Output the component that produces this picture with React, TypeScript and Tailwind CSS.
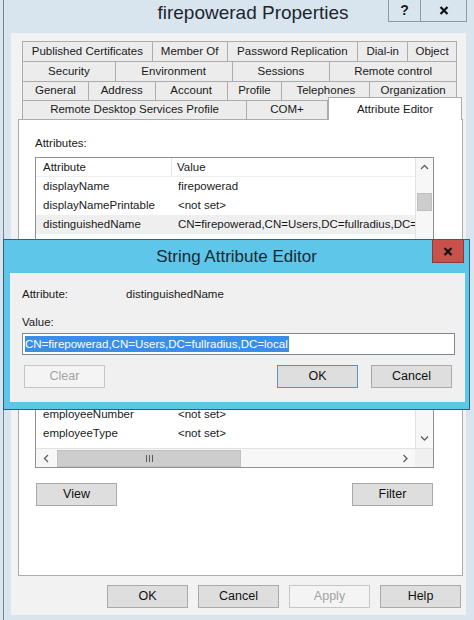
const tabRows = [
  {
    h: "h-[20px]",
    tabs: [
      { label: "Published Certificates", w: "w-[130px]" },
      { label: "Member Of", w: "w-[75px]" },
      { label: "Password Replication", w: "w-[131px]" },
      { label: "Dial-in", w: "w-[50px]" },
      { label: "Object", w: "w-[49px]" },
    ],
  },
  {
    h: "h-[20px]",
    tabs: [
      { label: "Security", w: "w-[93px]" },
      { label: "Environment", w: "w-[117px]" },
      { label: "Sessions", w: "w-[98px]" },
      { label: "Remote control", w: "w-[127px]" },
    ],
  },
  {
    h: "h-[19px]",
    tabs: [
      { label: "General", w: "w-[66px]" },
      { label: "Address", w: "w-[67px]" },
      { label: "Account", w: "w-[72px]" },
      { label: "Profile", w: "w-[55px]" },
      { label: "Telephones", w: "w-[88px]" },
      { label: "Organization", w: "w-[87px]" },
    ],
  },
];

// rows behind the editor dialog are left blank
const attributes = [
  { name: "displayName", value: "firepowerad" },
  { name: "displayNamePrintable", value: "<not set>" },
  { name: "distinguishedName", value: "CN=firepowerad,CN=Users,DC=fullradius,DC=local", active: true },
  { name: "", value: "" },
  { name: "", value: "" },
  { name: "", value: "" },
  { name: "", value: "" },
  { name: "", value: "" },
  { name: "", value: "" },
  { name: "", value: "" },
  { name: "", value: "" },
  { name: "", value: "" },
  { name: "employeeNumber", value: "<not set>" },
  { name: "employeeType", value: "<not set>" },
];

function Chevron({ dir }: { dir: "up" | "down" | "left" | "right" }) {
  const d = {
    up: "M1 5 L4.5 1.5 L8 5",
    down: "M1 1.5 L4.5 5 L8 1.5",
    left: "M5 1 L1.5 4.5 L5 8",
    right: "M1.5 1 L5 4.5 L1.5 8",
  }[dir];
  const horiz = dir === "left" || dir === "right";
  return (
    <svg width={horiz ? 7 : 9} height={horiz ? 9 : 7} viewBox={horiz ? "0 0 7 9" : "0 0 9 7"}>
      <path d={d} stroke="#5f5f5f" strokeWidth="1.3" fill="none" />
    </svg>
  );
}

function Button({
  children,
  disabled,
  primary,
  className = "",
}: {
  children: React.ReactNode;
  disabled?: boolean;
  primary?: boolean;
  className?: string;
}) {
  const tone = disabled
    ? "bg-[#f4f4f4] border-[#c6c6c6] text-[#a2a2a2]"
    : primary
      ? "bg-[#dedede] border-[#5c8fc4] text-[#111]"
      : "bg-[#dedede] border-[#a9a9a9] text-[#111]";
  return (
    <div
      className={`w-[81px] h-[23px] border flex items-center justify-center text-[12.5px] ${tone} ${className}`}
    >
      {children}
    </div>
  );
}

function AttributeList() {
  return (
    <div className="w-[399px] h-[311px] border border-[#8d9197] bg-white flex flex-col">
      <div className="flex h-[290px]">
        <div className="flex-1 overflow-hidden">
          <div className="flex h-[19px] border-b border-[#eeeeee]">
            <div className="w-[136px] pl-[7px] border-r border-[#e3e3e3] leading-[19px]">Attribute</div>
            <div className="pl-[5px] leading-[19px]">Value</div>
          </div>
          {attributes.map((a, i) => (
            <div
              key={i}
              className={`flex h-[19px] leading-[19px] whitespace-nowrap ${a.active ? "bg-[#efefef]" : ""}`}
            >
              <div className="w-[136px] pl-[7px] shrink-0">{a.name}</div>
              <div className="pl-[6px]">{a.value}</div>
            </div>
          ))}
        </div>
        <div className="w-[18px] bg-[#f7f7f7] border-l border-[#e2e2e2] flex flex-col">
          <div className="h-[19px] flex items-center justify-center">
            <Chevron dir="up" />
          </div>
          <div className="h-[18px] mt-[16px] mx-[1px] bg-[#cdcdcd] border border-[#c0c0c0]" />
          <div className="flex-1" />
          <div className="h-[19px] flex items-center justify-center">
            <Chevron dir="down" />
          </div>
        </div>
      </div>
      <div className="flex flex-1 border-t border-[#e2e2e2]">
        <div className="flex-1 flex items-center bg-[#f7f7f7]">
          <div className="w-[20px] h-full flex items-center justify-center">
            <Chevron dir="left" />
          </div>
          <div className="w-[184px] h-[17px] ml-[1px] bg-[#cdcdcd] border border-[#c0c0c0] flex items-center justify-center gap-[2px]">
            <div className="w-px h-[7px] bg-[#5a5a5a]" />
            <div className="w-px h-[7px] bg-[#5a5a5a]" />
            <div className="w-px h-[7px] bg-[#5a5a5a]" />
          </div>
          <div className="flex-1" />
          <div className="w-[19px] h-full flex items-center justify-center">
            <Chevron dir="right" />
          </div>
        </div>
        <div className="w-[18px] bg-[#f0f0f0]" />
      </div>
    </div>
  );
}

function StringEditor() {
  return (
    <div className="absolute left-[3px] top-[239px] w-[467px] h-[171px] border border-[#2d6278] bg-[#5dc6e9] flex flex-col z-20">
      <div className="relative h-[33px] flex items-center justify-center">
        <span className="text-[17px] text-[#1c2a33]">String Attribute Editor</span>
        <div className="absolute top-0 right-[5px] w-[32px] h-[23px] bg-[#c9514c] border border-[#8d3a37] border-t-0 flex items-center justify-center">
          <svg width="10" height="9" viewBox="0 0 10 9">
            <path d="M1.5 1 L8.5 8 M8.5 1 L1.5 8" stroke="#111" strokeWidth="2.2" />
          </svg>
        </div>
      </div>
      <div className="ml-[6px] mr-[4px] mb-[7px] flex-1 bg-[#f0f0f0] pl-[12px] pr-[13px] pt-[14px]">
        <div className="flex leading-[14px]">
          <div className="w-[104px]">Attribute:</div>
          <div>distinguishedName</div>
        </div>
        <div className="mt-[14px] leading-[14px]">Value:</div>
        <div className="mt-[4px] w-[433px] h-[22px] bg-white border border-[#7e8a96] flex items-center pl-[2px]">
          <span className="bg-[#3a8ee8] text-white leading-[16px] pr-[1px] whitespace-nowrap">
            CN=firepowerad,CN=Users,DC=fullradius,DC=local
          </span>
        </div>
        <div className="flex mt-[10px] pl-[2px]">
          <Button disabled>Clear</Button>
          <div className="flex-1" />
          <Button primary>OK</Button>
          <Button className="ml-[13px]">Cancel</Button>
        </div>
      </div>
    </div>
  );
}

export default function App() {
  return (
    <div className="relative w-[474px] h-[620px] overflow-hidden bg-[#d9e5ee] text-[11.5px] text-[#1a1a1a] font-['Liberation_Sans',Arial,sans-serif]">
      <div className="h-full ml-[3px] border-l border-[#75848f] flex flex-col">
        {/* caption */}
        <div className="h-[33px] flex shrink-0">
          <div className="w-[384px] pl-[114px] pb-[6px] flex justify-center items-center">
            <span className="text-[19px] text-[#1c2630]">firepowerad Properties</span>
          </div>
          <div className="w-[33px] h-[22px] border border-t-0 border-[#8e99a3] flex items-center justify-center font-bold text-[14px]">
            ?
          </div>
          <div className="w-[46px] h-[22px] border border-t-0 border-l-0 border-[#8e99a3] flex items-center justify-center">
            <svg width="10" height="9" viewBox="0 0 10 9">
              <path d="M1.5 1 L8.5 8 M8.5 1 L1.5 8" stroke="#111" strokeWidth="2.2" />
            </svg>
          </div>
        </div>

        <div className="ml-[7px] mr-[8px] mb-[5px] flex-1 bg-[#f2f2f2] pl-[7px] pt-[8px] flex flex-col">
          {/* tab strip */}
          <div className="ml-[4px]">
            {tabRows.map((row, i) => (
              <div key={i} className={`flex ${row.h} border-t border-l border-[#acacac] w-[435px]`}>
                {row.tabs.map((t) => (
                  <div
                    key={t.label}
                    className={`${t.w} h-full border-r border-[#acacac] bg-[#ececec] flex items-center justify-center whitespace-nowrap`}
                  >
                    {t.label}
                  </div>
                ))}
              </div>
            ))}
            <div className="flex h-[19px]">
              <div className="w-[225px] h-full border-t border-l border-r border-[#acacac] bg-[#ececec] flex items-center justify-center">
                Remote Desktop Services Profile
              </div>
              <div className="w-[81px] h-full border-t border-r border-[#acacac] bg-[#ececec] flex items-center justify-center">
                COM+
              </div>
              <div className="relative z-10 w-[134px] h-[23px] -mt-[3px] border-t border-r border-l border-[#acacac] bg-white flex items-start justify-center pt-[3px]">
                Attribute Editor
              </div>
            </div>
          </div>

          {/* tab page */}
          <div className="w-[445px] h-[457px] border border-[#acacac] bg-white pl-[16px] pt-[16px]">
            <div className="leading-[14px]">Attributes:</div>
            <div className="mt-[7px]">
              <AttributeList />
            </div>
            <div className="mt-[15px] w-[399px] px-[1px] flex justify-between">
              <Button>View</Button>
              <Button>Filter</Button>
            </div>
          </div>

          <div className="mt-[9px] flex justify-end gap-[10px] pr-[5px]">
            <Button>OK</Button>
            <Button>Cancel</Button>
            <Button disabled>Apply</Button>
            <Button>Help</Button>
          </div>
        </div>
      </div>
      <StringEditor />
    </div>
  );
}
